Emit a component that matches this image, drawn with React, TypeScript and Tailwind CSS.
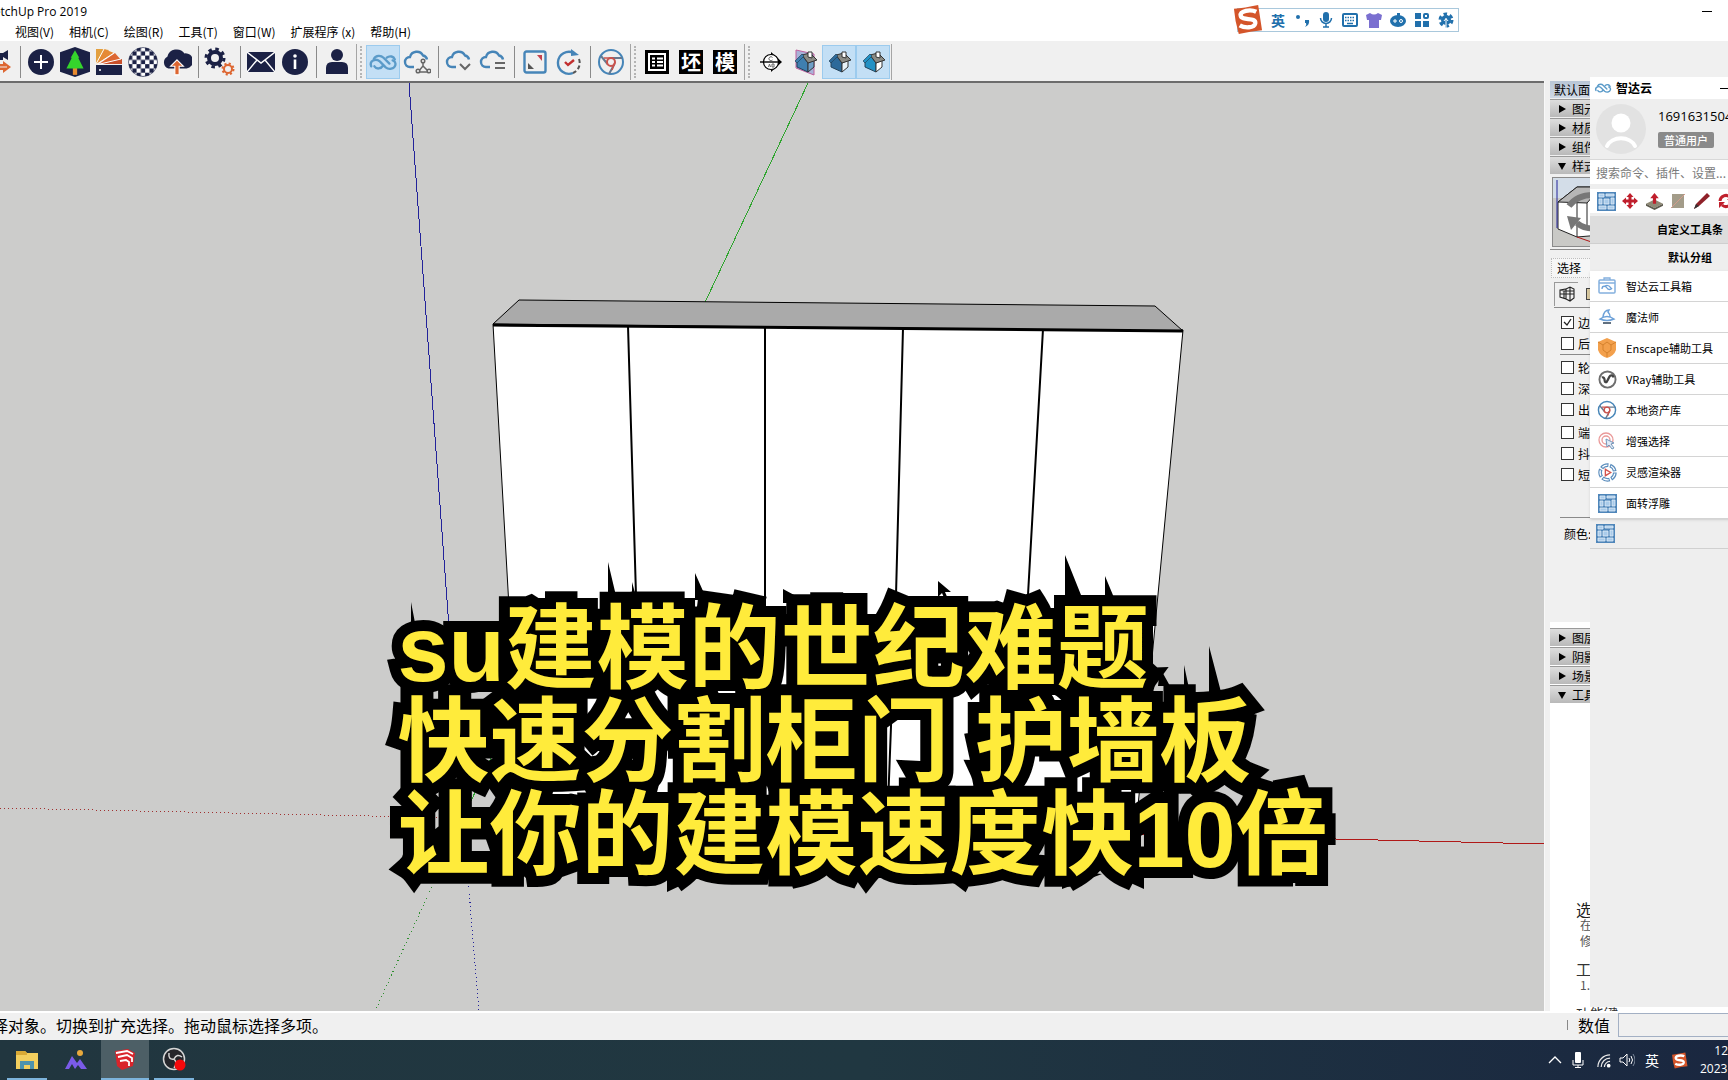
import type { ReactNode } from 'react'

const NAVY = '#1b2145'
const ORANGE = '#dd6631'
const BLUE = '#4685b8'

function Icon({ size = 28, box = 28, children }: { size?: number; box?: number; children: ReactNode }) {
  return (
    <svg width={size} height={size} viewBox={`0 0 ${box} ${box}`} fill="none" aria-hidden="true" className="shrink-0">
      {children}
    </svg>
  )
}

// ---------- toolbar drawings ----------

const cloudPath = 'M11 19H7a5 5 0 0 1 0-10 7 7 0 0 1 13-1.500a5 5 0 0 1 4 4'

const LogoMark = ({ size = 28 }: { size?: number }) => (
  <Icon size={size}>
    <g stroke="#5b9bc9" strokeWidth="2.200" strokeLinecap="round">
      <path d="M3 18c-2-5 4-8 8-4.500l5.500 5.500c3 2.500 8 1.500 9-2 .6-2-.5-4-2.500-4.500" />
      <path d="M5.500 11C7.500 7.500 12 7.500 14.500 10l5.500 5.500" />
      <path d="M6 18c2 3 6 2.500 8-.5M17.500 10c3-2.500 6.500-1 7.500 1.500" />
    </g>
  </Icon>
)

const FlipIcon = () => (
  <Icon>
    <path d="M6 5h12l5-3v10l-5-3v3H6z" fill={NAVY} />
    <path d="M4 16h14v-3l8 6-8 6v-3H4M4 21h10" fill={ORANGE} />
    <path d="M4 19h18" stroke="#f0f0f0" />
  </Icon>
)
const PlusIcon = () => (
  <Icon>
    <circle cx="14" cy="14" r="13" fill={NAVY} />
    <path d="M14 7v14M7 14h14" stroke="#fff" strokeWidth="2" />
  </Icon>
)
const TreeIcon = () => (
  <Icon size={30}>
    <path d="M14 0l14 5v18l-14 5-14-5V5z" fill={NAVY} />
    <path d="M12 19h4v7h-4z" fill="#e88a2e" />
    <path d="M14 3l4 7h-1l5 10H6l5-10h-1z" fill="#35d42c" />
  </Icon>
)
const SwatchIcon = () => (
  <Icon>
    <path d="M1 1h6l7 1-12 14H1z" fill="#e3a03f" />
    <path d="M9 1l10 4L2 16z" fill="#e58a35" />
    <path d="M20 5l6 7-22 4z" fill={ORANGE} />
    <path d="M27 11v5H5z" fill="#c9502a" />
    <path d="M1 17h26v10H1z" fill={NAVY} />
    <path d="M9 1L1 16M19 5L2 16M26 11L3 16.500" stroke="#fff" />
    <circle cx="5" cy="22" r="1" fill="#fff" />
  </Icon>
)
const GlobeIcon = () => (
  <Icon size={30}>
    <defs>
      <pattern id="checks" width="8" height="8" patternUnits="userSpaceOnUse">
        <path d="M0 0h4v4H0zM4 4h4v4H4z" fill={NAVY} />
      </pattern>
    </defs>
    <circle cx="14" cy="14" r="13.500" fill="#fff" />
    <circle cx="14" cy="14" r="13.500" fill="url(#checks)" stroke={NAVY} strokeWidth=".6" />
  </Icon>
)
const UploadIcon = () => (
  <Icon size={30}>
    <path d="M6 20a6 6 0 0 1-1-11 9 9 0 0 1 16-3 7 7 0 0 1 2 14z" fill={NAVY} />
    <path d="M14 12l6 6h-4v8h-4v-8H8z" fill={ORANGE} stroke="#fff" />
  </Icon>
)
const GearsIcon = () => (
  <Icon size={32} box={32}>
    <circle cx="12" cy="12" r="6" stroke={NAVY} strokeWidth="4" />
    <circle cx="12" cy="12" r="9" stroke={NAVY} strokeWidth="3" strokeDasharray="3.500 3.570" />
    <circle cx="25" cy="23" r="4" stroke={ORANGE} strokeWidth="2" />
    <circle cx="25" cy="23" r="5.500" stroke={ORANGE} strokeWidth="2" strokeDasharray="2.100 2.220" />
  </Icon>
)
const MailIcon = () => (
  <Icon>
    <path d="M0 4h28v20H0z" fill={NAVY} />
    <path d="M0 4l14 11L28 4M0 24l10-12M28 24L18 12" stroke="#fff" strokeWidth="1.400" />
  </Icon>
)
const InfoIcon = () => (
  <Icon>
    <circle cx="14" cy="14" r="13" fill={NAVY} />
    <circle cx="14" cy="8" r="1.800" fill="#fff" />
    <path d="M14 11.500V21" stroke="#fff" strokeWidth="2.600" />
  </Icon>
)
const PersonIcon = () => (
  <Icon>
    <circle cx="14" cy="7" r="6" fill={NAVY} />
    <path d="M3 26v-6q0-6 6-6h10q6 0 6 6v6z" fill={NAVY} />
  </Icon>
)
const CloudNetIcon = () => (
  <Icon>
    <path d={cloudPath} stroke={BLUE} strokeWidth="2.400" />
    <path d="M20 13v5l-5 6h11l-6-6" stroke="#666" strokeWidth="1.500" />
    <g fill="#f0f0f0" stroke="#666" strokeWidth="1.500">
      <circle cx="20" cy="13" r="1.800" />
      <circle cx="15" cy="23" r="1.800" />
      <circle cx="26" cy="23" r="1.800" />
    </g>
  </Icon>
)
const CloudDownIcon = () => (
  <Icon>
    <path d={cloudPath} stroke={BLUE} strokeWidth="2.400" />
    <path d="M15 16l5 5 5-5" stroke="#666" strokeWidth="2" />
  </Icon>
)
const CloudListIcon = () => (
  <Icon>
    <path d={cloudPath} stroke={BLUE} strokeWidth="2.400" />
    <path d="M16 15h10M16 20h10" stroke="#666" strokeWidth="2" />
  </Icon>
)
const ResizeIcon = () => (
  <Icon>
    <rect x="3.500" y="3.500" width="21" height="21" rx="2" stroke={BLUE} strokeWidth="2.400" />
    <path d="M16 7h5v6z" fill="#c4424e" />
    <path d="M7 15v6h6z" fill="#555" />
  </Icon>
)
const RefreshIcon = () => (
  <Icon>
    <path d="M18 25A11 11 0 1 1 19 5" stroke={BLUE} strokeWidth="2.400" />
    <path d="M16 1l8 6-8 1z" fill={BLUE} />
    <path d="M24 11a11 11 0 0 1-6 14" stroke="#555" strokeWidth="2" strokeDasharray="4 2.500" />
    <path d="M10 14l3 3 6-5" stroke="#c22f2f" strokeWidth="2.400" />
  </Icon>
)
const ChromeIcon = ({ size = 28 }: { size?: number }) => (
  <Icon size={size}>
    <circle cx="14" cy="14" r="12" stroke={BLUE} strokeWidth="2" />
    <path d="M14 10h11M17.500 16L12 26M10.500 16L4 8" stroke="#66798f" strokeWidth="2" />
    <circle cx="14" cy="14" r="4" stroke="#c9534d" strokeWidth="2" />
    <path d="M7 10h7M18 14l-3 8" stroke="#c9534d" strokeWidth="1.500" />
  </Icon>
)
const GlyphTile = ({ char }: { char: string }) => (
  <span className="flex size-6 items-center justify-center bg-black text-xl leading-6 font-bold text-white">
    {char}
  </span>
)
const TableTile = () => (
  <Icon size={24} box={24}>
    <path d="M0 0h24v24H0z" fill="#000" />
    <rect x="4" y="4" width="16" height="16" stroke="#fff" strokeWidth="2" />
    <path d="M7 8.500h3M12 8.500h6M7 12h3M12 12h6M7 15.500h3M12 15.500h6" stroke="#fff" strokeWidth="2" />
  </Icon>
)
const CompassIcon = () => (
  <Icon>
    <path d="M14 4l11 10-11 10z" fill="#000" />
    <circle cx="14" cy="14" r="7.500" fill="#fff" stroke="#000" strokeWidth="1.200" />
    <path d="M3 14h21" stroke="#000" strokeWidth="1.400" />
    <path d="M11.500 19l1-3 1 3M15 19v-3h2v3h-2M15.500 9.500a2 2 0 1 0 0 2.500" stroke="#666" />
  </Icon>
)
function HouseIcon({ wall, side, plane }: { wall: string; side: string; plane?: boolean }) {
  return (
    <Icon>
      {plane && <path d="M5 2l18 4v21L5 20z" fill="#a9b3d8" stroke="#c05f9c" />}
      <path d="M6 12l5-5 6 8v9l-11-5z" fill={wall} stroke="#24435a" />
      <path d="M17 15l6-3v7l-6 5z" fill={side} stroke="#333" />
      <path d="M11 7l8-2 7 7-9 3z" fill="#8b8b85" stroke="#333" />
      <path d="M4 13l7-7 2 2-7 7z" fill={wall} stroke="#24435a" strokeWidth=".7" />
      <path d="M17 4h4v6l-4-1z" fill="#fff" stroke="#333" />
    </Icon>
  )
}

const toolGroups: { label: string; icon: ReactNode; active?: boolean }[][][] = [
  [
    [{ label: '翻转', icon: <FlipIcon /> }],
    [
      { label: '添加', icon: <PlusIcon /> },
      { label: '植物', icon: <TreeIcon /> },
      { label: '色卡', icon: <SwatchIcon /> },
      { label: '贴图', icon: <GlobeIcon /> },
      { label: '上传', icon: <UploadIcon /> },
    ],
    [{ label: '设置', icon: <GearsIcon /> }],
    [
      { label: '邮件', icon: <MailIcon /> },
      { label: '信息', icon: <InfoIcon /> },
    ],
    [{ label: '账户', icon: <PersonIcon /> }],
  ],
  [
    [
      { label: '智达云', icon: <LogoMark size={30} />, active: true },
      { label: '云共享', icon: <CloudNetIcon /> },
    ],
    [
      { label: '云下载', icon: <CloudDownIcon /> },
      { label: '云列表', icon: <CloudListIcon /> },
    ],
    [
      { label: '缩放', icon: <ResizeIcon /> },
      { label: '更新', icon: <RefreshIcon /> },
    ],
    [{ label: '资产库', icon: <ChromeIcon /> }],
  ],
  [
    [
      { label: '表格', icon: <TableTile /> },
      { label: '坯', icon: <GlyphTile char="坯" /> },
      { label: '模', icon: <GlyphTile char="模" /> },
    ],
  ],
  [
    [
      { label: '剖切面', icon: <CompassIcon /> },
      { label: '显示剖切面', icon: <HouseIcon wall="#3f7fb0" side="#6f9fc8" plane /> },
      { label: '显示剖面切割', icon: <HouseIcon wall="#2d6a9a" side="#e8f2f8" />, active: true },
      { label: '显示剖面填充', icon: <HouseIcon wall="#2391c4" side="#ffffff" />, active: true },
    ],
  ],
]

function Toolbar() {
  return (
    <div className="flex h-10 shrink-0 items-center overflow-hidden bg-[#f0f0f0] pt-0.5">
      <div className="-ml-[18px] flex items-center">
        {toolGroups.map((band, b) => (
          <div key={b} className="flex items-center">
            {b > 0 && (
              <span className="flex h-9 w-3 items-center justify-between pr-1">
                <i className="ml-0.5 h-9 w-px bg-[#a5a5a5]" />
                <i className="h-8 border-l-2 border-dotted border-[#b5b5b5]" />
              </span>
            )}
            {band.map((group, g) => (
              <div key={g} className="flex items-center">
                {g > 0 && (
                  <span className="flex w-2 justify-center">
                    <i className="h-8 w-px bg-[#8a8a8a]" />
                  </span>
                )}
                {group.map((tool) => (
                  <button
                    key={tool.label}
                    type="button"
                    aria-label={tool.label}
                    className={
                      tool.active
                        ? 'flex h-[34px] w-[34px] items-center justify-center border border-[#9ccbee] bg-[#c3dff5]'
                        : 'flex h-[34px] w-[34px] items-center justify-center'
                    }
                  >
                    {tool.icon}
                  </button>
                ))}
              </div>
            ))}
          </div>
        ))}
        <i className="ml-px h-9 w-px bg-[#a5a5a5]" />
      </div>
    </div>
  )
}

// ---------- input method bar ----------

const SogouLogo = ({ size }: { size: number }) => (
  <Icon size={size} box={32}>
    <path d="M2 5Q13 4 27 1q2 13 4 26-12 1-24 4Q3 18 2 5z" fill="#d4552a" />
    <path d="M25 8C19 5 8 7 9 12c1 6 16 1 15 8-1 5-11 5-16 2" stroke="#fff" strokeWidth="4.500" />
  </Icon>
)

const imeTools: { label: string; icon: ReactNode }[] = [
  {
    label: '标点',
    icon: (
      <>
        <circle cx="4" cy="5" r="2" fill="#2170ac" />
        <path d="M11 8h4q1 5-4 7 2-2 1-4h-1z" fill="#2170ac" />
      </>
    ),
  },
  {
    label: '语音',
    icon: (
      <>
        <rect x="5" y="0" width="6" height="10" rx="3" fill="#2170ac" />
        <path d="M2.500 6a5.500 5.500 0 0 0 11 0M8 12v3M5 15h6" stroke="#2170ac" strokeWidth="1.500" />
      </>
    ),
  },
  {
    label: '键盘',
    icon: (
      <>
        <rect x="1" y="2" width="14" height="12" rx="1" stroke="#2170ac" strokeWidth="2" />
        <path d="M3 5.500h10M3 8.500h10" stroke="#2170ac" strokeWidth="1.500" strokeDasharray="1.500 1" />
        <path d="M5 11.500h6" stroke="#2170ac" strokeWidth="1.500" />
      </>
    ),
  },
  { label: '皮肤', icon: <path d="M4 1q4 3 8 0l4 2-1 5h-2v8H3V8H1L0 3z" fill="#7a6fd0" /> },
  {
    label: '助手',
    icon: (
      <>
        <ellipse cx="8" cy="9" rx="8" ry="6" fill="#2170ac" />
        <path d="M7 1h3v3H7z" fill="#2170ac" />
        <path d="M3 9h4M5 7v4" stroke="#fff" />
        <circle cx="11" cy="9" r="1.500" stroke="#fff" />
      </>
    ),
  },
  {
    label: '工具箱',
    icon: (
      <>
        <path d="M1 1h6v6H1zM1 9h6v6H1zM9 9h6v6H9z" fill="#2170ac" />
        <rect x="10" y="2" width="4" height="4" rx="1" stroke="#2170ac" strokeWidth="2" />
      </>
    ),
  },
  {
    label: '智能',
    icon: (
      <>
        <circle cx="8" cy="8" r="5" fill="#2170ac" />
        <circle cx="8" cy="8" r="6" stroke="#2170ac" strokeWidth="3" strokeDasharray="3.500 2.780" />
        <path d="M8 6v10M6 9q2-4 4 0" stroke="#fff" />
      </>
    ),
  },
]

function ImeBar() {
  return (
    <div className="absolute top-2 right-[269px] flex h-6 items-center gap-2 border border-[#a9c8dc] bg-white pr-1 pl-8">
      <span className="absolute -top-[5px] -left-1.5">
        <SogouLogo size={31} />
      </span>
      <button type="button" className="w-4 text-sm leading-4 font-bold text-[#2170ac]">英</button>
      {imeTools.map((tool) => (
        <button key={tool.label} type="button" aria-label={tool.label}>
          <Icon size={16} box={16}>{tool.icon}</Icon>
        </button>
      ))}
    </div>
  )
}

// ---------- model view ----------

function ModelView() {
  return (
    <main className="relative min-w-0 flex-1 overflow-hidden border-t-2 border-[#6c6c6c] bg-[#cccccb]">
      <svg className="absolute inset-0 h-full w-full" viewBox="0 83 1544 928" preserveAspectRatio="xMidYMid slice" aria-hidden="true">
        <g strokeWidth="1" fill="none" shapeRendering="crispEdges">
          <path d="M409 83L463 818" stroke="#22229a" />
          <path d="M463 818L479 1011" stroke="#22229a" strokeDasharray="1 3" />
          <path d="M808 83L463 818" stroke="#2fa52f" />
          <path d="M463 818L375 1011" stroke="#2f8f2f" strokeDasharray="1 3" />
          <path d="M463 818L1544 844" stroke="#b01818" />
          <path d="M0 808L463 818" stroke="#a03030" strokeDasharray="1 3" />
        </g>
        <g stroke="#000" strokeLinejoin="round">
          <path d="M493 324L1183 330L1138 806L520 802Z" fill="#fff" />
          <path d="M493 324L519 300L1155 306L1183 331Z" fill="#aaaaaa" />
          <path d="M493 325L1183 331" strokeWidth="3" />
          <path d="M628 326L636 595L642 803M765 327V804M903 328L896 595L888 805M1043 329L1028 595L1014 806" fill="none" strokeWidth="2" />
        </g>
        <path d="M938 581v16l4-4 3 7 3-1-3-7h6z" fill="#000" />
        {/* sharp corners that stick out of the caption's outline */}
        <g fill="#000">
          <path d="M411 602l5 26h-5zM608 562l9 38h-9zM632 582l5 18h-5zM695 573l12 27h-12zM783 589l26 14h-26z" />
          <path d="M1065 555l18 45h-18zM1105 576l10 24h-10zM1160 668l10 18h-12z" />
          <path d="M1184 665l6 28h-6zM1209 646l12 46h-12zM667 870l38 4-38 18zM1062 870l40 4-40 15zM1144 889l-40-18h40z" />
        </g>
      </svg>
    </main>
  )
}

const captionText = 'su建模的世纪难题\n快速分割柜门 护墙板\n让你的建模速度快10倍'

function Caption() {
  return (
    <p
      data-text={captionText}
      className="pointer-events-none absolute bottom-[198px] left-[23%] isolate font-['Liberation_Sans','Noto_Sans_CJK_SC',sans-serif] text-[92px] leading-[93px] font-bold whitespace-pre text-[#ffeb3b] before:absolute before:inset-0 before:-z-10 before:text-black before:content-[attr(data-text)] before:[-webkit-text-stroke:22px_#000]"
    >
      {captionText}
    </p>
  )
}

// ---------- default tray ----------

function TrayHeader({ label, open }: { label: string; open?: boolean }) {
  return (
    <button
      type="button"
      className="mb-px flex h-[18px] w-full items-center gap-1.5 border-t border-[#9a9a9a] bg-linear-to-b from-[#dedede] to-[#b9b9b9] pl-2 text-left text-xs leading-4"
    >
      <Icon size={8} box={8}>
        <path d={open ? 'M0 1h8L4 8z' : 'M1 0l7 4-7 4z'} fill="#000" />
      </Icon>
      {label}
    </button>
  )
}

function EdgeOption({ label, checked = false }: { label: string; checked?: boolean }) {
  return (
    <label className="flex h-[21px] items-center gap-1 pl-[11px] text-xs leading-4">
      <span className="grid size-[13px] shrink-0">
        <input
          type="checkbox"
          defaultChecked={checked}
          className="peer col-start-1 row-start-1 size-[13px] appearance-none border border-[#333] bg-white"
        />
        <svg viewBox="0 0 13 13" fill="none" className="pointer-events-none invisible col-start-1 row-start-1 peer-checked:visible">
          <path d="M3 6l3 3 4-6" stroke="#222" strokeWidth="1.300" />
        </svg>
      </span>
      {label}
    </label>
  )
}

function Tray() {
  return (
    <aside className="flex w-[184px] shrink-0 border-l border-[#f8f8f8] bg-[#f0f0f0] pl-[5px]">
      <div className="flex min-w-0 flex-1 flex-col overflow-hidden bg-white">
        <h2 className="h-[17px] shrink-0 bg-linear-to-b from-[#b9c6d6] to-[#d0d9e6] pl-1 text-xs leading-[17px]">默认面</h2>
        <div className="bg-[#f0f0f0] pt-px">
          <TrayHeader label="图元" />
          <TrayHeader label="材质" />
          <TrayHeader label="组件" />
          <TrayHeader label="样式" open />
        </div>
        <section className="mb-1 h-[449px] shrink-0 border-b-2 border-white bg-[#f0f0f0]">
          <div className="border-b border-[#8a8a8a] p-0.5">
            <div className="h-[70px] w-[72px] border border-[#8a8a8a]">
              <svg width="70" height="68" viewBox="0 0 70 68" aria-hidden="true">
                <path d="M0 0h70v20H0z" fill="#d3dde8" />
                <path d="M0 20h70v48H0z" fill="#c9c9c6" />
                <path d="M5 24l19-15h24v48l-24 2-19-8z" fill="#fff" stroke="#222" />
                <path d="M5 24l19-15h24L34 25z" fill="#b6b6b6" stroke="#222" />
                <path d="M24 25v34M34 25v22" stroke="#222" />
                <path d="M4 2v48" stroke="#22229a" />
                <path d="M24 59l26 9" stroke="#b01818" />
                <path d="M16 28q8-11 24-11M46 50q-14 2-22-5" stroke="#777" strokeWidth="6" fill="none" />
                <path d="M14 38l14 2-10 12z" fill="#777" />
              </svg>
            </div>
          </div>
          <div className="mt-2 ml-px border border-dotted border-[#bdbdbd] bg-[#f6f6f6] pl-[5px] text-xs leading-[18px]">选择</div>
          <div className="mt-0.5 ml-1 flex h-7 items-center gap-2 border-b border-[#8a8a8a]">
            <button type="button" aria-label="边线设置" className="flex size-6 items-center justify-center border-t border-l border-[#999]">
              <Icon size={16} box={16}>
                <path d="M1 4l6-1v10l-6-2zM7 3l4-2 4 2v9l-4 3-4-2M11 1v14M1 4l4 1h10M5 5v7M1 8h14" stroke="#222" strokeWidth="1.100" />
              </Icon>
            </button>
            <button type="button" aria-label="平面设置" className="h-3 w-3 border border-[#444] bg-[#d8c9a0]" />
          </div>
          <div className="mt-1">
            <EdgeOption label="边" checked />
            <EdgeOption label="后" />
            <hr className="ml-2.5 border-[#8a8a8a]" />
            <div className="mt-0.5">
              <EdgeOption label="轮" />
              <EdgeOption label="深" />
              <EdgeOption label="出" />
            </div>
            <div className="mt-0.5">
              <EdgeOption label="端" />
              <EdgeOption label="抖" />
              <EdgeOption label="短" />
            </div>
          </div>
          <hr className="mt-8 ml-2.5 border-[#8a8a8a]" />
          <p className="mt-2 ml-3.5 text-xs leading-4">颜色:</p>
        </section>
        <div>
          <TrayHeader label="图层" />
          <TrayHeader label="阴影" />
          <TrayHeader label="场景" />
          <TrayHeader label="工具" open />
        </div>
        <section className="mt-auto -mb-2.5 shrink-0 pl-[26px] text-xs leading-4 text-[#555]">
          <h3 className="text-base leading-4 text-[#222]">选</h3>
          <p className="pl-1">在</p>
          <p className="pl-1">修</p>
          <h3 className="mt-3 text-[15px] leading-4 text-[#333]">工</h3>
          <p className="pl-1">1.</p>
          <h3 className="mt-3 text-sm leading-4 text-[#333]">功能键</h3>
        </section>
      </div>
    </aside>
  )
}

// ---------- floating plug-in window ----------

const ReliefIcon = () => (
  <Icon size={19} box={19}>
    <path d="M0 0h19v19H0z" fill="#4f86ba" />
    <path d="M2 2h5v3H2zM9 2h8v2H9zM2 7h3v5H2zM14 6h3v6h-3zM7 7h5v5H7zM2 14h7v3H2zM11 14h6v3h-6z" fill="#a9cbea" stroke="#e3eef8" strokeWidth=".8" />
  </Icon>
)

const quickTools: { label: string; icon: ReactNode }[] = [
  { label: '浮雕', icon: <ReliefIcon /> },
  {
    label: '移动',
    icon: (
      <Icon size={16} box={16}>
        <path d="M8 0l3.500 4H9.500v2.500H12v-2L16 8l-4 3.500v-2H9.500V12h2L8 16l-3.500-4h2V9.500H4v2L0 8l4-3.500v2h2.500V4h-2z" fill="#c01f2c" />
      </Icon>
    ),
  },
  {
    label: '推拉',
    icon: (
      <Icon size={17} box={16}>
        <path d="M0 10l8-4 8 4-8 4z" fill="#8f8a76" />
        <path d="M0 10l8 4v2l-8-4zM16 10l-8 4v2l8-4z" fill="#5d5a4d" />
        <path d="M8 0l4 5H9.500v5h-3V5H4z" fill="#c01f2c" />
      </Icon>
    ),
  },
  {
    label: '矩形',
    icon: (
      <Icon size={16} box={16}>
        <path d="M2 1h12v14H2z" fill="#a39c89" />
        <path d="M1 15L15 1" stroke="#d49b8c" />
      </Icon>
    ),
  },
  {
    label: '直线',
    icon: (
      <Icon size={16} box={16}>
        <path d="M0 16l2-5L13 0l3 3L5 13z" fill="#8f2129" />
        <path d="M0 16l2-5 3 2z" fill="#333" />
      </Icon>
    ),
  },
  {
    label: '旋转',
    icon: (
      <Icon size={16} box={16}>
        <path d="M2 8a6 6 0 0 1 10-4M14 8a6 6 0 0 1-10 4" stroke="#c01f2c" strokeWidth="3" />
        <path d="M15 1v6H9zM1 15V9h6z" fill="#c01f2c" />
      </Icon>
    ),
  },
]

const plugins: { label: string; icon: ReactNode }[] = [
  {
    label: '智达云工具箱',
    icon: (
      <Icon size={18} box={18}>
        <rect x="1" y="3" width="16" height="13" rx="1" stroke="#84b0de" strokeWidth="1.500" />
        <path d="M6 3V1h6v2M1 6h16" stroke="#84b0de" strokeWidth="1.300" />
        <path d="M4 12c0-4 4-3 5-1s4 2 5 0M7 9q3-2 6 2" stroke="#6da1d8" strokeWidth="1.300" />
      </Icon>
    ),
  },
  {
    label: '魔法师',
    icon: (
      <Icon size={18} box={18}>
        <path d="M5 9q1-7 6-7l-1 2q2 2 2 5" stroke="#6da1d8" strokeWidth="1.500" />
        <path d="M2 11q7-5 14 0-7 3-14 0z" stroke="#6da1d8" strokeWidth="1.500" />
        <path d="M5 14h8v2H5z" fill="#61707f" />
      </Icon>
    ),
  },
  {
    label: 'Enscape辅助工具',
    icon: (
      <Icon size={20} box={20}>
        <path d="M10 0l9 4v8q-2 6-9 8-7-2-9-8V4z" fill="#f3a04c" />
        <path d="M1 4l5 3 4-3 4 3 5-3M6 7v5l4 3 4-3V7M10 15v4" stroke="#d5822d" />
      </Icon>
    ),
  },
  {
    label: 'VRay辅助工具',
    icon: (
      <Icon size={19} box={20}>
        <circle cx="10" cy="10" r="8.500" stroke="#6e6e6e" strokeWidth="2" />
        <path d="M4 8c2-1 3 1 3 3s2 3 3 0l2-4c1-2 4-2 4 1" stroke="#444" strokeWidth="2.400" />
      </Icon>
    ),
  },
  { label: '本地资产库', icon: <ChromeIcon size={20} /> },
  {
    label: '增强选择',
    icon: (
      <Icon size={18} box={18}>
        <circle cx="8" cy="8" r="7" stroke="#ea9a9a" strokeWidth="1.300" />
        <circle cx="8" cy="8" r="4" stroke="#ea9a9a" strokeWidth="1.300" />
        <path d="M8 7l8 4-3 1 3 4-2 1-3-4-2 2z" fill="#dfeaf6" stroke="#7397bb" />
      </Icon>
    ),
  },
  {
    label: '灵感渲染器',
    icon: (
      <Icon size={19} box={18}>
        <circle cx="9" cy="9" r="7" stroke="#5b8dbd" strokeWidth="3.500" strokeDasharray="7.300 1.500" />
        <circle cx="9" cy="9" r="7" stroke="#fff" strokeWidth="1.300" strokeDasharray="5.300 3.500" strokeDashoffset="-1" />
        <path d="M7 6l5 3-5 3z" stroke="#d3524c" strokeWidth="1.300" />
      </Icon>
    ),
  },
  { label: '面转浮雕', icon: <ReliefIcon /> },
]

function PluginWindow() {
  return (
    <section className="absolute top-[77px] -right-[62px] bottom-[73px] w-[200px] bg-[#eeeeee] text-[11px]">
      <header className="flex h-[22px] items-center gap-1 bg-white pl-1">
        <LogoMark size={18} />
        <h2 className="text-xs font-bold">智达云</h2>
        <button type="button" aria-label="最小化" className="mr-[60px] ml-auto h-px w-2.5 bg-black" />
      </header>

      <div className="flex h-[61px] items-center gap-3 border-b border-[#d8d8d8] pl-1.5">
        <Icon size={50} box={50}>
          <circle cx="25" cy="25" r="25" fill="#e2e2e2" />
          <circle cx="25" cy="19" r="9.500" fill="#fff" />
          <path d="M11 42a15 12 0 0 1 28 0" stroke="#fff" strokeWidth="4" strokeLinecap="round" />
        </Icon>
        <div className="pb-1">
          <p className="font-['Open_Sans',sans-serif] text-[13px] leading-5">1691631504</p>
          <span className="mt-1.5 block w-14 rounded-xs bg-[#8a8a8a] text-center leading-4 font-medium text-white">普通用户</span>
        </div>
      </div>

      <input
        type="text"
        aria-label="搜索命令"
        placeholder="搜索命令、插件、设置..."
        className="block h-6 w-full bg-white pl-1.5 text-xs outline-none placeholder:text-[#7a7a7a]"
      />
      <div className="mt-[5px] flex h-6 items-center overflow-hidden bg-white pl-1">
        {quickTools.map((tool) => (
          <button key={tool.label} type="button" aria-label={tool.label} className="flex w-6 shrink-0 justify-center">
            {tool.icon}
          </button>
        ))}
      </div>

      <h3 className="mt-[3px] border-b border-[#cfcfcf] bg-[#dddddd] text-center leading-[27px] font-bold">自定义工具条</h3>
      <h3 className="text-center leading-[27px] font-bold">默认分组</h3>

      <ul className="bg-white shadow-sm">
        {plugins.map((plugin) => (
          <li key={plugin.label} className="border-b border-[#d4d4d4]">
            <button type="button" className="flex h-[30px] w-full items-center gap-2 pl-1.5 text-left">
              <span className="flex w-[22px] justify-center">{plugin.icon}</span>
              {plugin.label}
            </button>
          </li>
        ))}
      </ul>
      <button type="button" aria-label="面转浮雕" className="flex h-[30px] w-full items-center border-b border-[#d0d0d0] pl-1.5">
        <ReliefIcon />
      </button>
    </section>
  )
}

// ---------- bottom bars ----------

function StatusBar() {
  return (
    <footer className="flex h-[29px] shrink-0 items-center justify-between border-t-2 border-white bg-[#f0f0f0] pb-[3px]">
      <p className="flex w-[328px] justify-end overflow-hidden text-base leading-6 whitespace-nowrap">
        选择对象。切换到扩充选择。拖动鼠标选择多项。
      </p>
      <div className="flex items-center">
        <i className="mr-2.5 h-2.5 w-px bg-[#888]" />
        <label htmlFor="measure" className="text-base leading-6">数值</label>
        <input id="measure" type="text" className="ml-2 h-6 w-[110px] border border-r-0 border-[#a3b0c4] bg-[#f0f0f0] outline-none" />
      </div>
    </footer>
  )
}

const tasks: { label: string; icon: ReactNode; active?: boolean; running?: boolean }[] = [
  {
    label: '文件资源管理器',
    running: true,
    icon: (
      <>
        <path d="M1 4h9l2 2h11v16H1z" fill="#f3cf5e" />
        <path d="M1 4h9l2 2v2H1z" fill="#d9a935" />
        <path d="M5 14h14v8h-4v-4h-6v4H5z" fill="#4e93ae" />
      </>
    ),
  },
  {
    label: '图片',
    icon: (
      <>
        <path d="M1 21l7-13 5 7 3-4 7 10h-6l-3-4-3 4-3-5-3 5z" fill="#7a5be8" />
        <circle cx="16" cy="5" r="3" fill="#e8a93c" />
      </>
    ),
  },
  {
    label: 'SketchUp',
    active: true,
    running: true,
    icon: (
      <>
        <path d="M2 4l13-2 7 4-2 13-11 4-5-4z" fill="#d9242b" />
        <path d="M3 6l11-2 6 3M5 10l9-2 5 3v4M7 14l6-1 3 2v4" stroke="#fff" strokeWidth="1.800" />
      </>
    ),
  },
  {
    label: 'OBS',
    running: true,
    icon: (
      <>
        <circle cx="12" cy="12" r="10.500" fill="#25262b" stroke="#d6d6d6" strokeWidth="1.500" />
        <path d="M12 12q-6 1-5-6M12 12q3-6 8-2M12 12q4 4 0 9" stroke="#d6d6d6" strokeWidth="1.500" />
        <circle cx="18" cy="18" r="5.500" fill="#f5090b" />
      </>
    ),
  },
]

function Taskbar() {
  return (
    <nav className="flex h-10 shrink-0 items-center justify-between bg-linear-to-r from-[#21363f] via-[#203741] to-[#1a2740] pl-[3px] text-white">
      <div className="flex h-full gap-px">
        {tasks.map((task) => (
          <button
            key={task.label}
            type="button"
            aria-label={task.label}
            className={
              task.active
                ? 'flex h-full w-12 flex-col items-center bg-[#4d5f66]'
                : 'flex h-full w-12 flex-col items-center px-1'
            }
          >
            <span className="flex flex-1 items-center">
              <Icon size={24} box={24}>{task.icon}</Icon>
            </span>
            {task.running && <i className="h-0.5 w-full bg-[#7db4dc]" />}
          </button>
        ))}
      </div>

      <div className="flex items-center">
        <button type="button" aria-label="显示隐藏的图标" className="mr-2">
          <Icon size={14} box={14}>
            <path d="M1 10l6-6 6 6" stroke="#fff" strokeWidth="1.300" />
          </Icon>
        </button>
        <button type="button" aria-label="麦克风" className="mr-2.5">
          <Icon size={16} box={16}>
            <rect x="5" y="0" width="6" height="11" rx="1" fill="#fff" />
            <path d="M3 8v5h10V8M8 13v2M5 15.500h6" stroke="#fff" />
          </Icon>
        </button>
        <button type="button" aria-label="网络" className="mr-2">
          <Icon size={15} box={16}>
            <path d="M2 15A13 13 0 0 1 15 2M5.500 15A9.500 9.500 0 0 1 15 5.500M9 15a6 6 0 0 1 6-6" stroke="#e8e8e8" strokeWidth="1.300" />
            <circle cx="13.500" cy="13.500" r="2" fill="#fff" />
          </Icon>
        </button>
        <button type="button" aria-label="音量" className="mr-2.5">
          <Icon size={16} box={16}>
            <path d="M1 6h3l4-4v12l-4-4H1z" stroke="#fff" />
            <path d="M10 6q1.500 2 0 4M12 4q3 4 0 8" stroke="#fff" />
            <path d="M14 2q4 6 0 12" stroke="#7b8798" />
          </Icon>
        </button>
        <button type="button" className="mr-3 text-sm leading-5">英</button>
        <button type="button" aria-label="搜狗输入法" className="mr-3">
          <SogouLogo size={17} />
        </button>
        <div className="w-7 overflow-hidden font-['Open_Sans',sans-serif] text-xs leading-[18px] whitespace-nowrap">
          <p className="text-right">12</p>
          <p>2023</p>
        </div>
      </div>
    </nav>
  )
}

const menus = ['视图(V)', '相机(C)', '绘图(R)', '工具(T)', '窗口(W)', '扩展程序 (x)', '帮助(H)']

export default function App() {
  return (
    <div className="relative flex h-screen flex-col overflow-hidden bg-white font-['Noto_Sans_CJK_SC',sans-serif] text-black">
      <header className="flex h-[23px] shrink-0 items-center justify-between pr-4">
        <h1 className="flex w-[87px] justify-end overflow-hidden font-['Open_Sans',sans-serif] text-xs leading-5 whitespace-nowrap">
          SketchUp Pro 2019
        </h1>
        <button type="button" aria-label="最小化" className="h-px w-2.5 bg-black" />
      </header>

      <nav className="flex h-[18px] shrink-0 items-center gap-[15px] pl-[15px] text-xs leading-4">
        {menus.map((menu) => (
          <button key={menu} type="button">{menu}</button>
        ))}
      </nav>

      <Toolbar />

      <div className="flex min-h-0 flex-1">
        <ModelView />
        <Tray />
      </div>

      <StatusBar />
      <Taskbar />

      <ImeBar />
      <PluginWindow />
      <Caption />
    </div>
  )
}
